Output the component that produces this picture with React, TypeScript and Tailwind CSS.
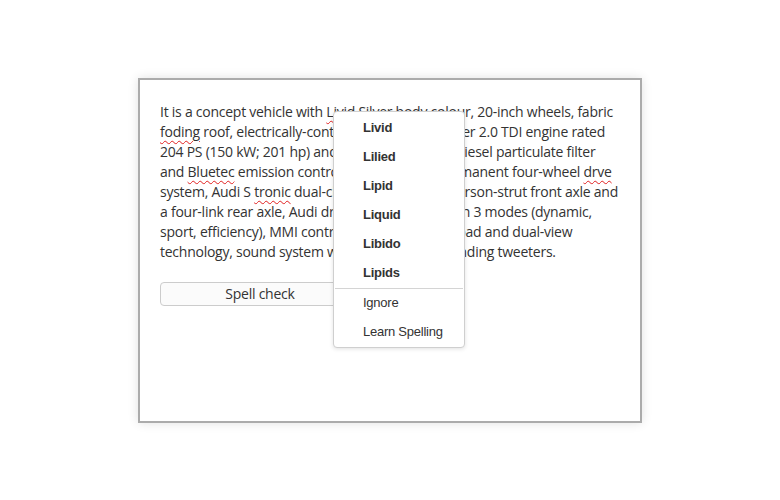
const lines: (string | { bad: string })[][] = [
  ['It is a concept vehicle with ', { bad: 'Livid' }, ' Silver body colour, 20-inch wheels, fabric'],
  [{ bad: 'foding' }, ' roof, electrically-controlled lid, diesel power 2.0 TDI engine rated'],
  ['204 PS (150 kW; 201 hp) and 400 Nm (295 lb·ft) diesel particulate filter'],
  ['and ', { bad: 'Bluetec' }, ' emission controls, Audi quattro permanent four-wheel ', { bad: 'drve' }],
  ['system, Audi S ', { bad: 'tronic' }, ' dual-clutch gearbox McPherson-strut front axle and'],
  ['a four-link rear axle, Audi drive select system with 3 modes (dynamic,'],
  ['sport, efficiency), MMI control panel with touch pad and dual-view'],
  ['technology, sound system with twin pull-out standing tweeters.'],
];

const suggestions = ['Livid', 'Lilied', 'Lipid', 'Liquid', 'Libido', 'Lipids'];

function ContextMenu() {
  return (
    <div className="absolute left-[193px] top-[31px] w-[132px] rounded-[4px] border border-[#cfcfcf] bg-white pt-[2px] shadow-[0_1px_4px_rgba(0,0,0,0.12)] font-['Liberation_Sans',Arial,sans-serif] text-[13px] text-[#333]">
      {suggestions.map((s) => (
        <div key={s} className="flex h-[29px] items-center pl-[29px] font-bold">
          {s}
        </div>
      ))}
      <div className="mx-px h-px bg-[#d4d4d4]" />
      <div className="flex h-[29px] items-center pl-[29px]">Ignore</div>
      <div className="flex h-[29px] items-center pl-[29px]">Learn Spelling</div>
    </div>
  );
}

export default function App() {
  return (
    <div className="flex h-[500px] w-[780px] items-center justify-center bg-white">
      <div className="relative h-[345px] w-[504px] border-2 border-[#ababab] bg-white px-5 pt-[22px] shadow-[0_0_10px_rgba(0,0,0,0.12)] font-['Open_Sans',sans-serif] text-[14px] leading-[20px] tracking-[-0.25px] text-[#333]">
        <p className="whitespace-nowrap">
          {lines.map((parts, i) => (
            <span key={i} className="block">
              {parts.map((p, j) =>
                typeof p === 'string' ? (
                  <span key={j}>{p}</span>
                ) : (
                  <span key={j} className="underline decoration-wavy decoration-[#e02020] decoration-1 underline-offset-[3px]">
                    {p.bad}
                  </span>
                ),
              )}
            </span>
          ))}
        </p>
        <button className="mt-5 flex h-[24px] w-[200px] items-center justify-center rounded-[4px] border border-[#cccccc] bg-[#fbfbfb] text-[14px] text-[#333]">
          Spell check
        </button>
        <ContextMenu />
      </div>
    </div>
  );
}
